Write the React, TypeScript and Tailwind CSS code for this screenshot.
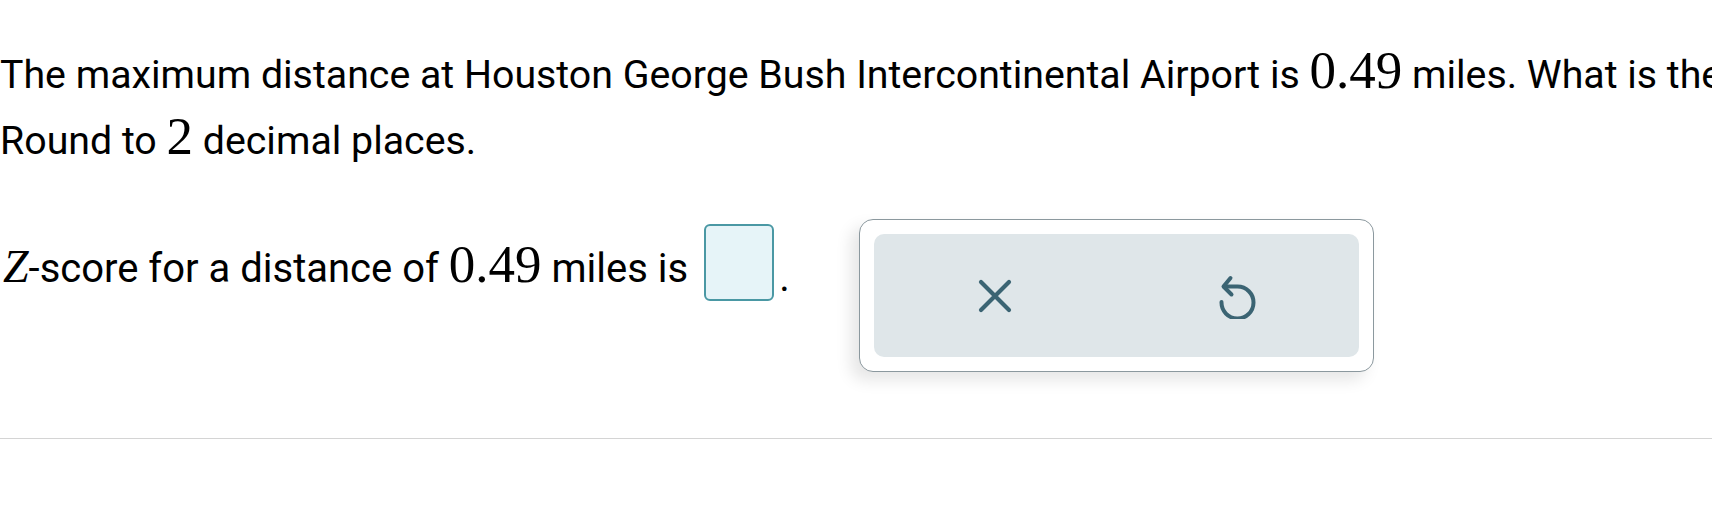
import React from "react";

const Num = ({ children }: { children: React.ReactNode }) => (
  <span className="font-['Liberation_Serif',serif] text-[53px] leading-none">{children}</span>
);

export default function App() {
  return (
    <div className="w-full h-[523px] bg-white overflow-hidden text-black font-['Roboto',sans-serif]">
      <div className="pt-[42px] text-[39.3px] leading-[66px] whitespace-nowrap overflow-hidden">
        <p className="h-[66px]">
          The maximum distance at Houston George Bush Intercontinental Airport is <Num>0.49</Num> miles. What is the corresponding z-score?
        </p>
        <p className="h-[66px]">
          Round to <Num>2</Num> decimal places.
        </p>
      </div>
      <div className="flex items-start mt-[45px] pl-[3px]">
        <div className="flex items-center mt-[5px]">
          <span className="text-[40px] leading-[40px] whitespace-nowrap mt-[4px]">
            <span className="font-['Liberation_Serif',serif] italic text-[46px]">Z</span>-score for a distance of <Num>0.49</Num> miles is
          </span>
          <div className="ml-[16px] w-[70px] h-[77px] rounded-[6px] border-[2.5px] border-[#4a98a4] bg-[#e6f4f8]" />
          <span className="ml-[5px] mt-[30px] text-[40px] leading-[40px]">.</span>
        </div>
        <div className="ml-[69px] w-[515px] h-[153px] rounded-[14px] border border-[#8b989e] bg-white p-[14px] shadow-[-8px_8px_16px_rgba(0,0,0,0.10)]">
          <div className="grid grid-cols-2 h-full rounded-[10px] bg-[#dfe6e9]">
            <div className="flex items-center justify-center">
              <svg width="36" height="36" viewBox="0 0 36 36" fill="none" stroke="#3b6473" strokeWidth="4.2" strokeLinecap="round">
                <path d="M4 4 L32 32 M32 4 L4 32" />
              </svg>
            </div>
            <div className="flex items-center justify-center">
              <svg width="40" height="46" viewBox="0 0 40 46" fill="none" stroke="#3b6473" strokeWidth="4" strokeLinecap="round" strokeLinejoin="round">
                <path d="M4.5 29 A16 16 0 1 0 20.5 13.5 L7 13.5" />
                <path d="M13.5 5 L6.5 13.5 L14.5 21.5" />
              </svg>
            </div>
          </div>
        </div>
      </div>
      <div className="mt-[66px] border-t-[1.5px] border-[#d4d4d4]" />
    </div>
  );
}
